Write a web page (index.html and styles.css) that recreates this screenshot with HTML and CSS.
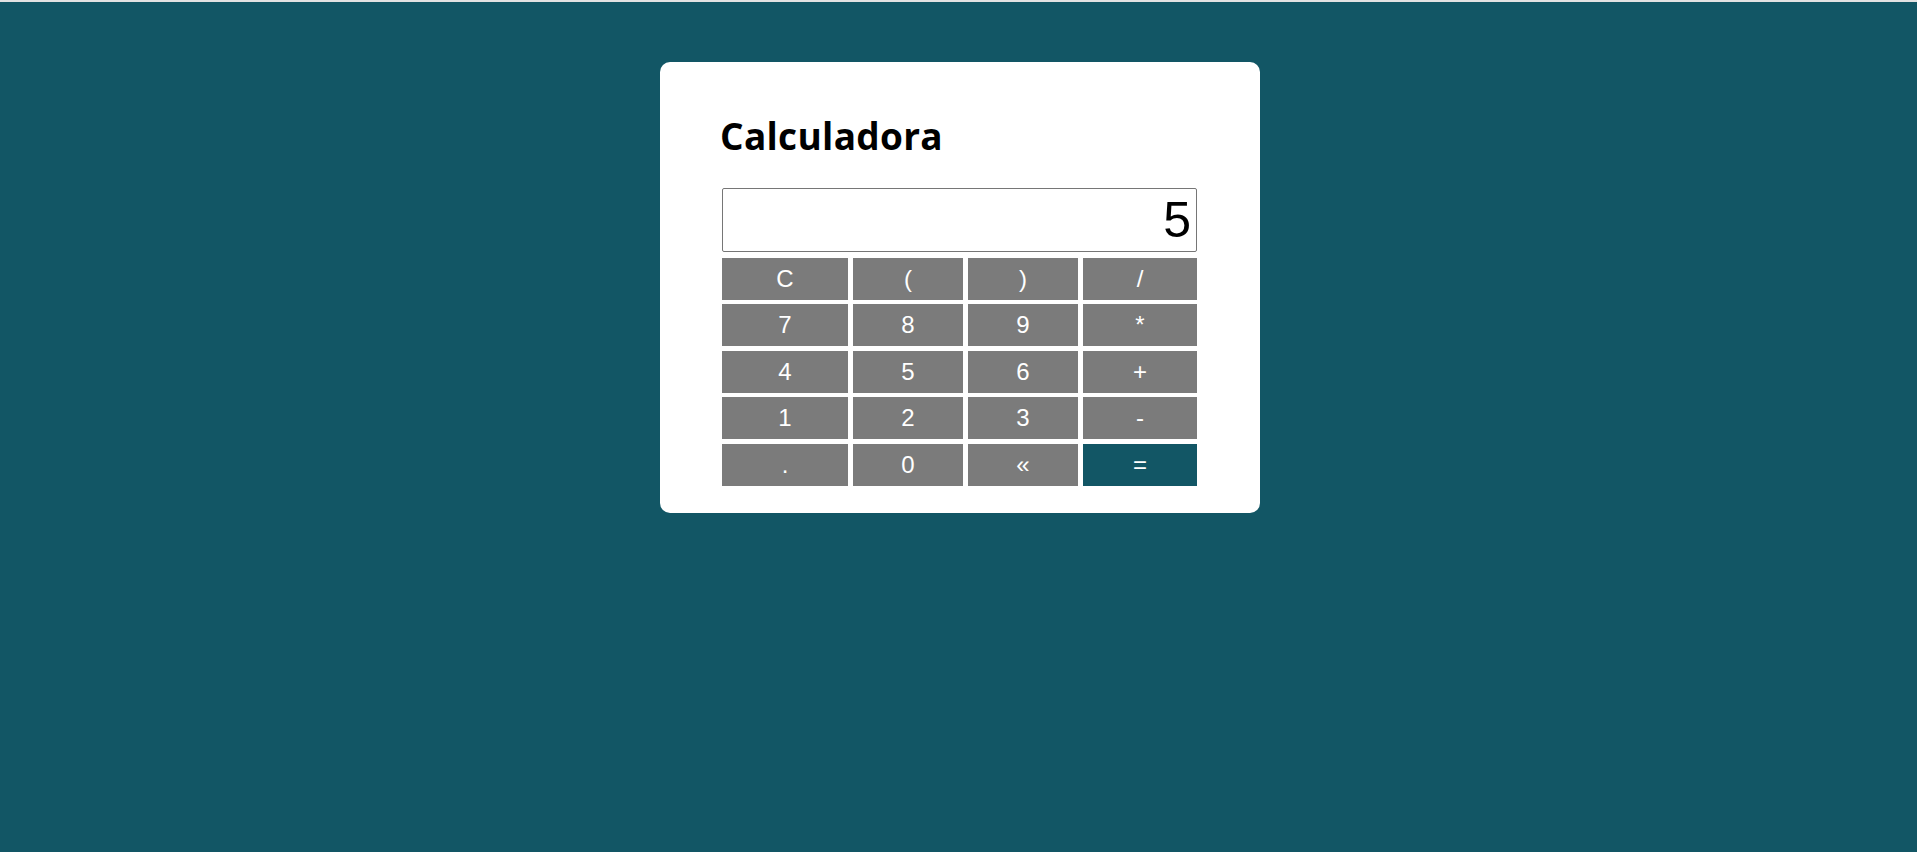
FILE: index.html
```html
<!DOCTYPE html>
<html lang="es">
<head>
<meta charset="utf-8">
<title>Calculadora</title>
<link rel="stylesheet" href="styles.css">
</head>
<body>
  <div class="topline"></div>
  <main class="page">
    <section class="card">
      <h1 class="title">Calculadora</h1>
      <div class="keypad">
        <input class="display" type="text" value="5" readonly>
        <button class="key">C</button>
        <button class="key">(</button>
        <button class="key">)</button>
        <button class="key">/</button>
        <button class="key">7</button>
        <button class="key">8</button>
        <button class="key">9</button>
        <button class="key">*</button>
        <button class="key">4</button>
        <button class="key">5</button>
        <button class="key">6</button>
        <button class="key">+</button>
        <button class="key">1</button>
        <button class="key">2</button>
        <button class="key">3</button>
        <button class="key">-</button>
        <button class="key">.</button>
        <button class="key">0</button>
        <button class="key">&laquo;</button>
        <button class="key key-equals">=</button>
      </div>
    </section>
  </main>
</body>
</html>
```
FILE: styles.css
```css
html, body {
  margin: 0;
  padding: 0;
  height: 100%;
}

body {
  background: #125665;
  display: flex;
  flex-direction: column;
  font-family: "Open Sans", "Liberation Sans", sans-serif;
}

.topline {
  height: 2px;
  background: #e2e2e2;
  flex: none;
}

.page {
  flex: 1;
  display: flex;
  justify-content: center;
  align-items: flex-start;
  padding-top: 60px;
  padding-left: 3px;
}

.card {
  width: 600px;
  box-sizing: border-box;
  background: #ffffff;
  border-radius: 10px;
  padding: 47.5px 60px 27px;
}

.title {
  margin: 0 0 27.5px;
  font-size: 37px;
  font-weight: 700;
  line-height: normal;
  color: #000;
  letter-spacing: 0.3px;
}

.keypad {
  width: 475px;
  margin-left: 2px;
  display: grid;
  grid-template-columns: 126px 110px 110px 114px;
  grid-template-rows: 65px;
  grid-auto-rows: 42px;
  column-gap: 5px;
  row-gap: 4.5px;
}

.display {
  grid-column: 1 / -1;
  grid-row: 1;
  align-self: start;
  height: 64px;
  box-sizing: border-box;
  border: 1px solid #767676;
  border-radius: 2px;
  padding: 0 5px 0 4px;
  text-align: right;
  font-family: "Liberation Sans", Arial, sans-serif;
  font-size: 50px;
  color: #000;
  background: #fff;
  outline: none;
}

.key {
  border: none;
  margin: 0;
  padding: 0;
  background: #7b7b7b;
  color: #ffffff;
  font-family: "Liberation Sans", Arial, sans-serif;
  font-size: 24px;
  cursor: pointer;
}

.key-equals {
  background: #125665;
}
```
